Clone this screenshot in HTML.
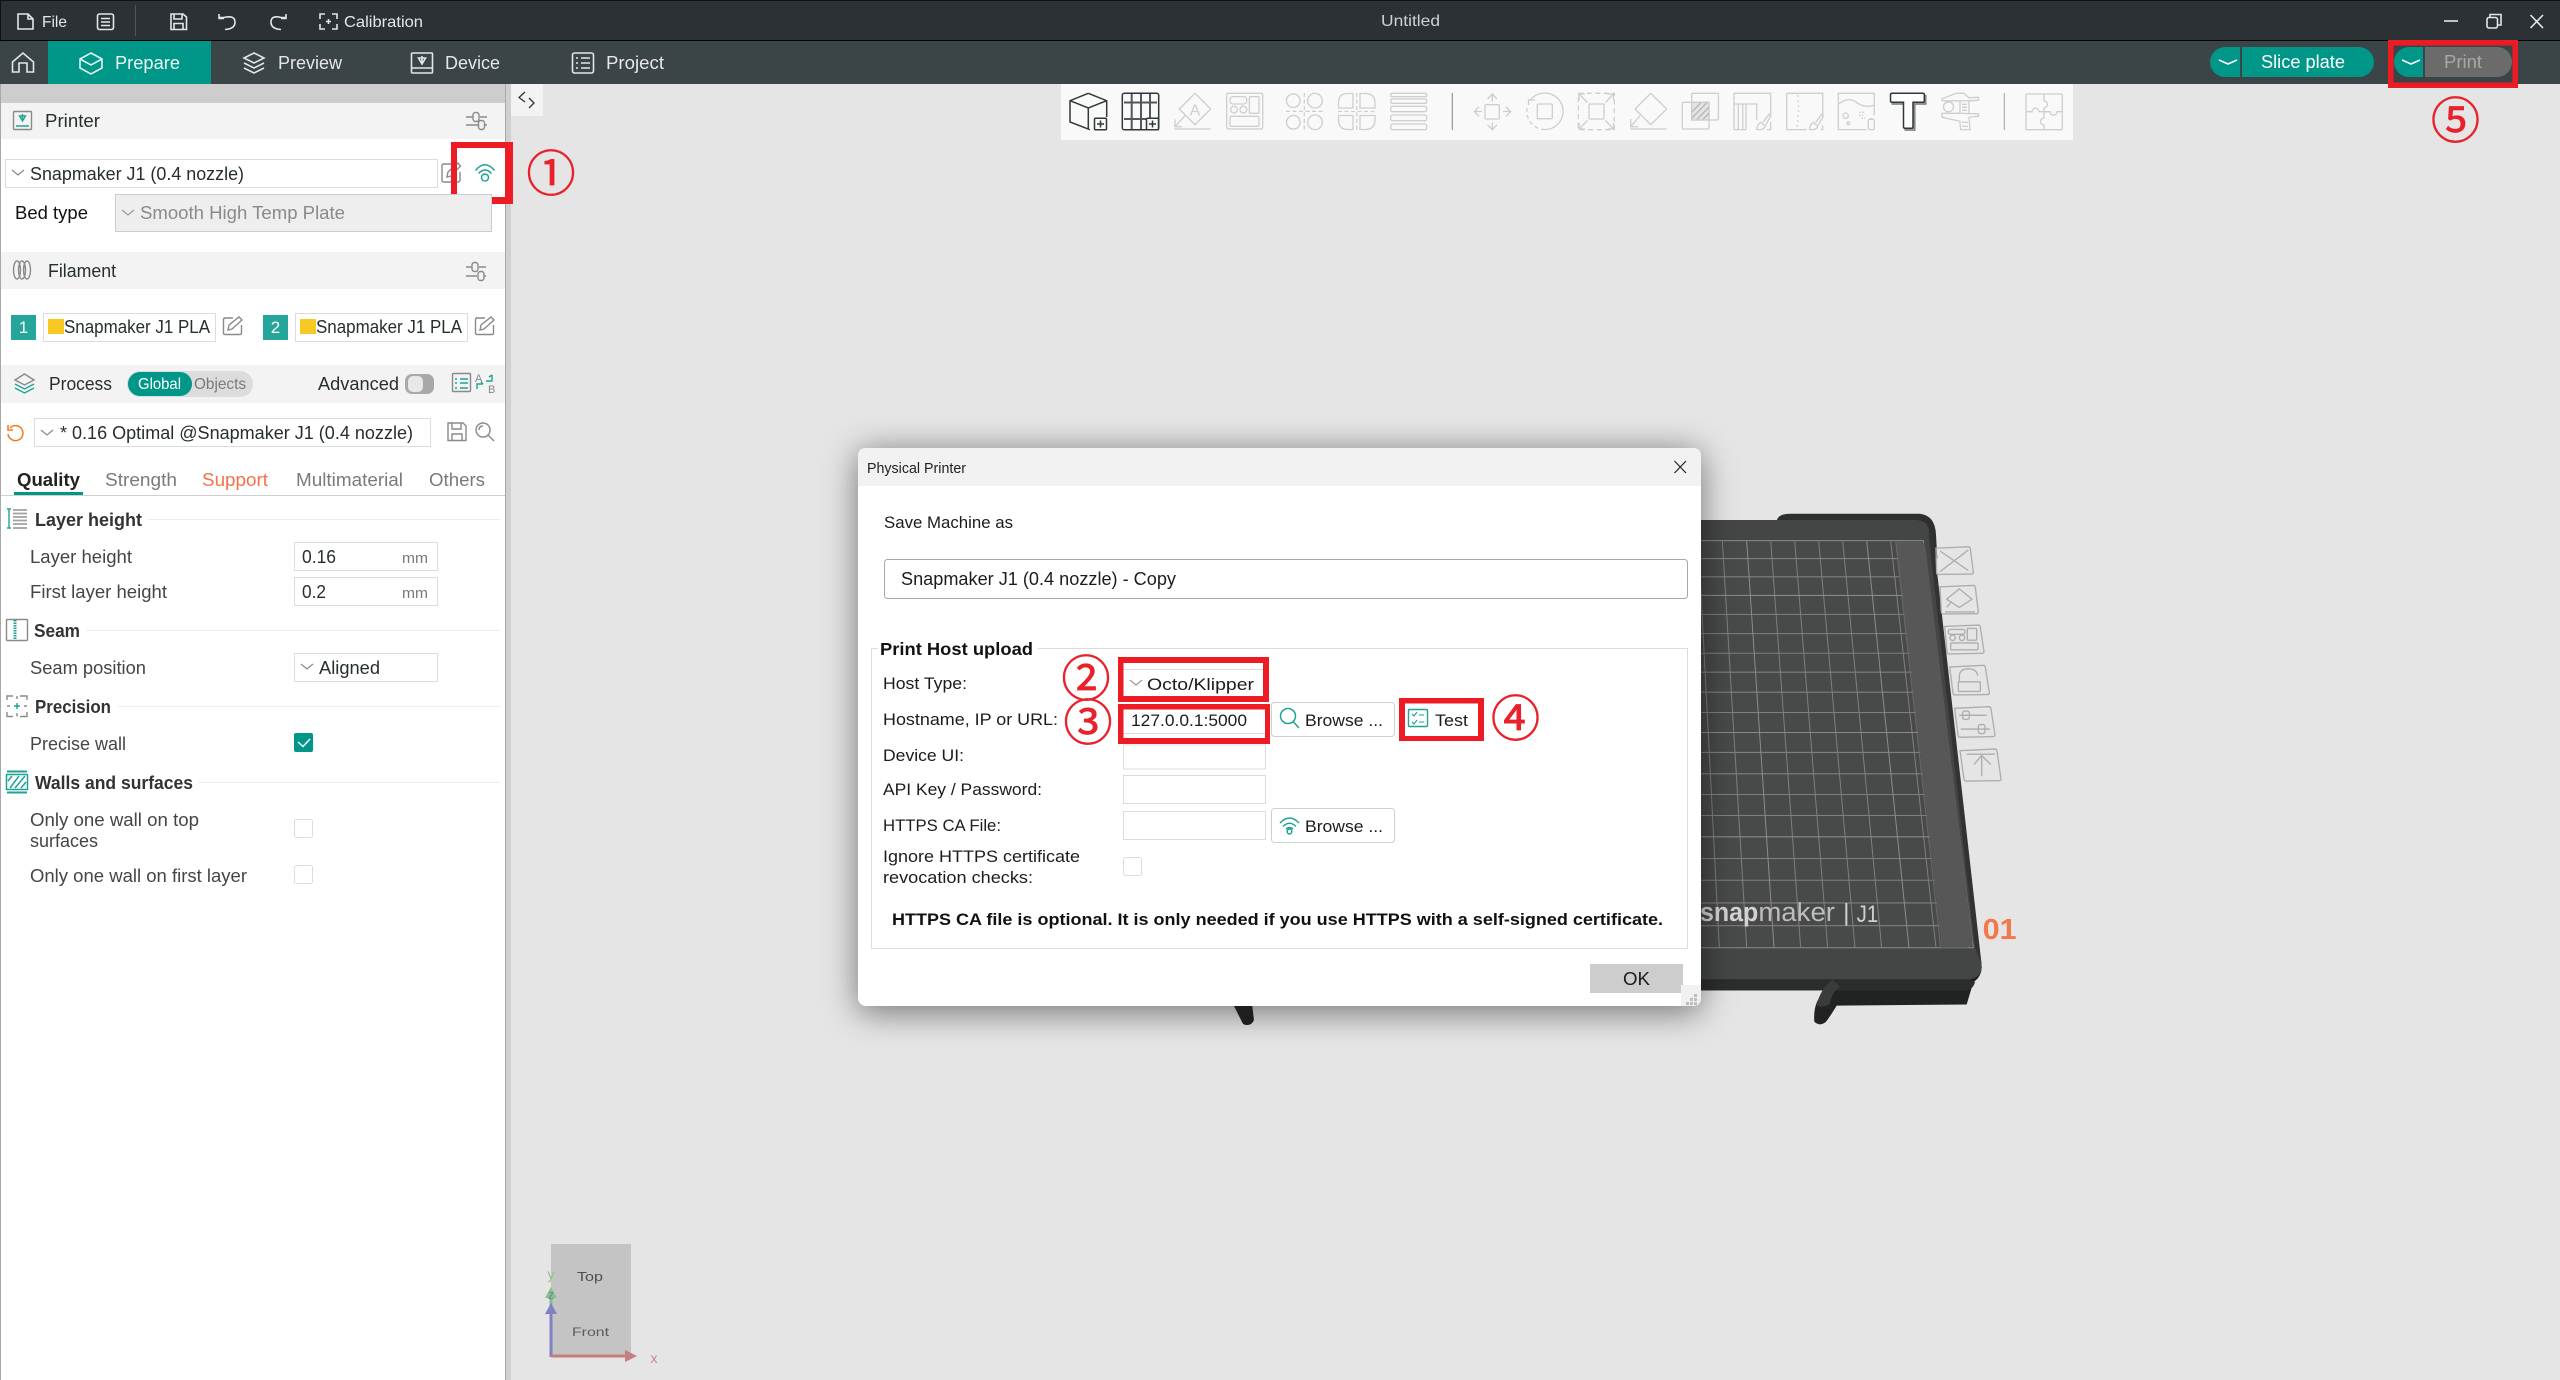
<!DOCTYPE html>
<html lang="en">
<head>
<meta charset="utf-8">
<title>Untitled</title>
<style>
html,body{margin:0;padding:0;background:#e5e5e5;width:2560px;height:1380px;overflow:hidden}
svg{display:block;position:absolute;left:0;top:0}
text{font-family:"Liberation Sans","Noto Sans CJK JP",sans-serif;white-space:pre}
.w{fill:#fff}
.l{font-size:18px;fill:#454545}
.d{font-size:18px;fill:#262e30}
.b{font-size:18px;font-weight:bold;fill:#333}
.m{font-size:16.5px;fill:#1c1c1c}
.g{fill:none;stroke:#cecece;stroke-width:1.3}
.k{fill:none;stroke:#2f383b;stroke-width:1.5}
.ic{fill:none;stroke:#8a8a8a;stroke-width:1.4}
.wi{fill:none;stroke:#e4e6e6;stroke-width:1.6}
.te{fill:none;stroke:#1fa394;stroke-width:1.5}
.bx{fill:#fff;stroke:#dcdcdc;stroke-width:1}
.circ{font-size:49px;fill:#e8212b;stroke:#e8212b;stroke-width:.7;font-family:"Noto Sans CJK JP",sans-serif}
</style>
</head>
<body>
<svg width="2560" height="1380" viewBox="0 0 2560 1380" xmlns="http://www.w3.org/2000/svg">
<defs>
<filter id="sh" x="-20%" y="-20%" width="140%" height="140%"><feGaussianBlur stdDeviation="17"/></filter>
</defs>
<rect width="2560" height="1380" fill="#e5e5e5"/>

<!-- 3D plate -->
<g transform="translate(1680,500) scale(.33333,.34440)">
  <path d="M290 60 Q295 40 330 40 H720 Q765 45 768 100 L772 170 L745 170 L740 90 L300 70Z" fill="#2e2f2f"/>
  <path d="M-300 58 H710 Q745 60 748 95 L905 1355 Q905 1385 880 1400 L860 1465 L470 1468 Q450 1500 438 1515 Q420 1530 403 1515 Q400 1480 412 1455 Q430 1425 455 1424 H-300Z" fill="#212222"/>
  <path d="M-300 58 H710 Q745 60 748 95 L905 1355 Q905 1385 870 1392 H-300Z" fill="#444645"/>
  <path d="M745 95 L762 130 L905 1350 L885 1300 Z" fill="#323333"/>
  <path d="M-300 118 H730 L880 1300 H-300Z" fill="#484949" stroke="#8a8a8a" stroke-width="3"/>
  <path d="M648 120 H720 Q735 122 737 140 L878 1280 Q878 1298 860 1300 H785Z" fill="#575757"/>
  <g stroke="#7f7f7f" stroke-width="3" fill="none">
    <path d="M-300 170H653M-300 223H660M-300 277H667M-300 332H674M-300 388H680M-300 445H688M-300 500H695M-300 558H701M-300 617H708M-300 675H714M-300 733H721M-300 795H728M-300 855H735M-300 916H742M-300 978H749M-300 1041H756M-300 1104H764M-300 1170H771M-300 1236H778"/>
    <path d="M632 118L768 1300M560 118L687 1300M488 118L605 1300M416 118L525 1300M344 118L443 1300M272 118L362 1300M200 118L282 1300M127 118L200 1300M55 118L118 1300M-17 118L38 1300"/>
    <path d="M647 118L782 1300" stroke="#6a6a6a"/>
  </g>
  <g stroke="#8f8f8f" stroke-width="2" fill="none">
    <path d="M200 118L282 1300M560 118L687 1300M-300 277H667M-300 675H714M-300 978H749"/>
  </g>
  <path d="M-300 1392 H870 L885 1400 Q880 1420 860 1425 H470 L455 1424 H-300Z" fill="#2b2c2c"/>
  <path d="M458 1392 L480 1415 Q460 1420 448 1465 Q425 1475 410 1468 Q420 1420 458 1392Z" fill="#3a3b3b"/>
  <text x="60" y="1222" font-size="74" font-weight="bold" fill="#d2d2d2" textLength="175" lengthAdjust="spacingAndGlyphs">snap</text>
  <text x="235" y="1222" font-size="74" fill="#bdbdbd" textLength="230" lengthAdjust="spacingAndGlyphs">maker</text>
  <path d="M499 1170V1236" stroke="#d0d0d0" stroke-width="6"/>
  <text x="530" y="1225" font-size="70" fill="#d0d0d0" textLength="65" lengthAdjust="spacingAndGlyphs">J1</text>
  <text x="908" y="1274" font-size="84" font-weight="bold" fill="#f4764a" textLength="102" lengthAdjust="spacingAndGlyphs">01</text>
  <g fill="none" stroke="#aeaeae" stroke-width="4">
    <path d="M768 140L866 136Q870 136 871 142L880 210Q880 215 875 215L775 216Q770 216 770 210Z"/>
    <path d="M780 148L865 205M865 145L780 208"/>
    <path d="M780 252L880 248Q885 248 886 254L895 325Q895 330 890 330L790 331Q785 331 784 325Z"/>
    <path d="M838 258L876 288L838 312L800 288ZM795 325H885M815 295L800 312"/>
    <path d="M794 367L895 363Q900 363 901 369L912 440Q912 445 907 445L806 447Q802 447 801 441Z"/>
    <rect x="805" y="376" width="50" height="14" rx="5"/><rect x="862" y="373" width="28" height="34" rx="2"/><circle cx="818" cy="400" r="8"/><circle cx="846" cy="400" r="8"/><rect x="812" y="415" width="82" height="20" rx="3"/>
    <path d="M809 485L910 480Q915 480 916 486L928 560Q928 565 923 565L824 566Q820 566 819 560Z"/>
    <path d="M838 528V510Q840 490 865 490Q890 490 893 510"/><rect x="835" y="528" width="66" height="28" rx="3"/>
    <path d="M824 605L927 600Q932 600 933 606L945 682Q945 687 940 687L840 689Q835 689 834 683Z"/>
    <path d="M838 625H920M842 665H930"/><rect x="848" y="613" width="20" height="24" rx="6"/><rect x="895" y="652" width="20" height="26" rx="6"/>
    <path d="M840 728L945 723Q950 723 951 729L963 810Q963 815 958 815L858 816Q853 816 852 810Z"/>
    <path d="M860 738H945M905 802V742M882 768L905 742L932 768"/>
  </g>
</g>

<!-- gizmo -->
<rect x="551" y="1244" width="80" height="111" fill="#c4c4c4"/>
<text x="590" y="1281" font-size="13" fill="#4d4d4d" text-anchor="middle" textLength="26" lengthAdjust="spacingAndGlyphs">Top</text>
<text x="590.5" y="1336" font-size="11.5" fill="#5a5a5a" text-anchor="middle" textLength="37" lengthAdjust="spacingAndGlyphs">Front</text>
<path d="M551 1298V1312" stroke="#83bd83" stroke-width="3"/>
<path d="M545 1298H557L551 1287Z" fill="#83c583"/>
<path d="M551 1357V1312" stroke="#8080c4" stroke-width="3"/>
<path d="M545 1314H557L551 1303Z" fill="#8080c4"/>
<path d="M551 1356H627" stroke="#c67f7f" stroke-width="3"/>
<path d="M625 1350V1362L637 1356Z" fill="#c67f7f"/>
<text x="551" y="1279" font-size="14" fill="#8cc48c" text-anchor="middle">y</text>
<text x="551" y="1299" font-size="13" fill="#7c7cc0" text-anchor="middle">z</text>
<text x="654" y="1363" font-size="14" fill="#c88a8a" text-anchor="middle">x</text>

<!-- toolbar -->
<rect x="1061" y="84" width="1012" height="56" fill="#f9f9f9"/>
<g class="k">
  <path d="M1088.300 93.300L1106.700 100.700V117M1088.300 93.300L1070 100.700V122L1090 129.700M1070 100.700L1088.300 108L1106.700 100.700M1088.300 108V129"/>
  <rect x="1094.500" y="118.300" width="12" height="11.400" rx="1"/><path d="M1100.500 120.500V127.500M1097 124H1104"/>
  <rect x="1122.300" y="93.300" width="36.400" height="36.400" rx="2"/>
  <path d="M1131.700 94V129M1141 94V129M1150 94V118M1124 102.500H1157M1124 119H1146" stroke="#50585a" stroke-width="2"/>
  <rect x="1146.500" y="118.300" width="12" height="11.400" rx="1" fill="#f9f9f9"/><path d="M1152.500 120.500V127.500M1149 124H1156"/>
</g>
<g class="g" transform="translate(1174,93.300)">
  <path d="M21 0L36.700 15.700L21 31.400L5.300 15.700Z"/><text x="21" y="22" font-size="16" fill="#cecece" stroke="none" text-anchor="middle">A</text><path d="M0 35.700H36.700M11 22.400L1 33.400M1 26V33.400H8"/>
</g>
<g class="g" transform="translate(1226.700,93.300)">
  <rect x="0" y="0" width="36" height="35.700" rx="1.500"/><rect x="3.300" y="3.300" width="16.700" height="7.400" rx="3"/><rect x="22.700" y="3.300" width="9.600" height="16.700" rx="1"/><circle cx="7.300" cy="16.300" r="3.400"/><circle cx="16.700" cy="16.300" r="3.400"/><rect x="3.300" y="23" width="29" height="10" rx="1.500"/>
</g>
<g class="g">
  <circle cx="1293.300" cy="100.700" r="6.800"/><circle cx="1315" cy="100.700" r="7.300"/><circle cx="1293.300" cy="122.300" r="6.800"/><circle cx="1315" cy="122.300" r="7.300"/>
  <path d="M1286 111.300H1323M1304.300 93V130" stroke-dasharray="4 2.500"/>
</g>
<g class="g">
  <path d="M1353 93.500V108H1338.500V103Q1338.500 93.500 1348 93.500ZM1360 93.500V108H1375V103Q1375 93.500 1365 93.500ZM1353 129.500V115.500H1338.500V120Q1338.500 129.500 1348 129.500ZM1360 129.500V115.500H1375V120Q1375 129.500 1365 129.500Z"/>
  <path d="M1338 111.500H1375.500M1356.700 93V130" stroke-dasharray="4 2.500"/>
</g>
<g class="g">
  <rect x="1390.700" y="93.300" width="36" height="3.400" rx="1.500"/><rect x="1390.700" y="99" width="36" height="4.300" rx="1.500"/><rect x="1390.700" y="106.300" width="36" height="5.400" rx="2"/><rect x="1390.700" y="115" width="36" height="5.700" rx="2"/><rect x="1390.700" y="124" width="36" height="5.700" rx="2"/>
</g>
<path d="M1452.300 93V130" stroke="#8f8f8f" stroke-width="1.100"/>
<g class="g">
  <rect x="1485" y="104.700" width="14.300" height="14.300" rx="1"/>
  <path d="M1492.300 94V101.500M1487.500 99L1492.300 94L1497 99M1492.300 129.700V122.500M1487.500 124.800L1492.300 129.700L1497 124.800M1474.300 111.500H1482M1479 106.700L1474.300 111.500L1479 116.300M1510.700 111.500H1503M1506 106.700L1510.700 111.500L1506 116.300"/>
</g>
<g class="g">
  <rect x="1537.300" y="104" width="15" height="14.700" rx="1"/>
  <path d="M1530 100.500A18.300 18.300 0 1 1 1545 129.600M1528.500 105V100H1535"/><path d="M1545 129.600A18.300 18.300 0 0 1 1527.300 107" stroke-dasharray="4 3"/>
</g>
<g class="g">
  <rect x="1578.300" y="93.300" width="36" height="36.400" stroke-dasharray="5 3.500"/><rect x="1589" y="104" width="15" height="15" rx="1"/>
  <path d="M1579 94L1587.500 102.500M1579 100V94H1585M1613.500 94L1605.500 102.500M1613.500 100V94H1607.500M1579 129L1587.500 120.500M1579 123V129H1585M1613.500 129L1605.500 120.500M1613.500 123V129H1607.500"/>
</g>
<g class="g">
  <path d="M1650.700 93.300L1666.700 109L1650.700 124.700L1635 109Z"/><path d="M1630 129H1666.700M1640 115.700L1630.700 126.700M1630.700 119V126.700H1638"/>
</g>
<g class="g">
  <rect x="1691.700" y="93.300" width="26.700" height="26.700" rx="1"/><rect x="1682.300" y="102.300" width="26.700" height="26.700" rx="1"/>
  <rect x="1691.700" y="102.300" width="17.300" height="17.700" fill="#e4e4e4"/>
  <path d="M1692 112L1701 102.500M1692 118L1707 102.500M1697 119.500L1709 107M1703 119.500L1709 113" stroke="#b8b8b8"/>
</g>
<g class="g" transform="translate(1734,93.300)">
  <path d="M0 36.300V0H36.700V24M0 10.700H22.700V27M4.300 10.700V36M8.700 10.700V36M12 10.700V36M0 36.300H12"/>
  <path d="M23 36.300Q23 31 27 29L31 33Q30 36.300 26 36.300ZM29 29L35 21Q36.500 21 36.500 23L31.500 32M33 36.300H36.700V29"/>
</g>
<g class="g" transform="translate(1786.700,93.300)">
  <path d="M20 36.300H0V0H36V24M36 32V36.300H34"/><path d="M11 2Q13 18 10 35" stroke-dasharray="1.500 3.500" stroke-width="1.600"/>
  <path d="M23 36.300Q23 31 27 29L31 33Q30 36.300 26 36.300ZM29 29L35 21Q36.500 21 36.500 23L31.500 32"/>
</g>
<g class="g" transform="translate(1838.300,93.300)">
  <path d="M28 36.300H0V0H36V22M0 11Q10 3 18 9T36 12"/><circle cx="7.300" cy="22.400" r="2.700"/><circle cx="10" cy="30" r="1.400"/><rect x="30" y="26" width="6" height="10.300" rx="1.500"/><path d="M33 26V23M21 19H27M21 22H25M23 25H27" stroke-dasharray="1.500 1.500"/>
</g>
<g transform="translate(1890,93.300)">
  <path d="M2 2H36V11H25V37H15V11H2Z" fill="#9a9a9a" stroke="#777" stroke-width="1"/>
  <path d="M2 0H33Q34.300 0 34.300 1.500V7.500Q34.300 9 33 9H23V33.500Q23 35 21.500 35H15Q13.500 35 13.500 33.500V9H2Q0.500 9 0.500 7.500V1.500Q0.500 0 2 0Z" fill="#fdfdfd" stroke="#2f383b" stroke-width="1.500"/>
</g>
<g class="g" transform="translate(1942,93.300)">
  <path d="M0 5.500L14 0H22L27 4.500L36.500 4V7L27 7.500L18 7.500H0ZM0 20H17L36.500 20.500V23L27 24L28 36.300H18.500L18 28L0 24ZM18 7.500V20M27 7.500V20"/><rect x="1.500" y="8.500" width="10" height="10" rx="5"/><path d="M20 11H25M20 14H25M20 17H25M20 29H26M20 33H26"/>
</g>
<path d="M2004.300 93V130" stroke="#a8a8a8" stroke-width="1.100"/>
<g class="g">
  <rect x="2026" y="94" width="36.300" height="35.700" rx="1"/>
  <path d="M2044 94V101a3.500 3.500 0 0 1 0 7V111.700M2026 111.700H2032a3.500 3.500 0 0 1 7 0H2044M2044 111.700H2050a3.500 3.500 0 0 0 7 0H2062.300M2044 111.700V118a3.500 3.500 0 0 0 0 7V129.700"/>
</g>

<!-- title bar -->
<rect x="0" y="0" width="2560" height="41" fill="#2b3134"/>
<rect x="0" y="40" width="2560" height="1" fill="#050505"/>
<rect x="0" y="0" width="2560" height="1" fill="#111"/>
<rect x="0" y="0" width="1" height="41" fill="#111"/>
<g class="wi">
  <path d="M18 14H28L33 19V29H18ZM28 14V19H33"/>
  <rect x="97.500" y="14" width="16" height="15.500" rx="2"/><path d="M101 18.500H110M101 22H110M101 25.500H110"/>
  <path d="M171 14H183L186.500 17V29.500H171ZM174 14V19H182V14M174 29V23.500H183V29"/>
  <path d="M219 17.500H224Q235 15 235 22Q235 29 225 29.500M219 14V18.500H224"/>
  <path d="M286 17.500H281Q271 15 271 22Q271 29 281 29.500M286 14V18.500H281"/>
  <path d="M320 19V14H325M332 14H337V19M337 24V29H332M325 29H320V24M328.500 19V24M326 21.500H331"/>
  <path d="M2444 21H2458"/>
  <rect x="2487" y="17.500" width="10.500" height="10.500" rx="2"/><path d="M2490 17V14.500H2501V25H2498"/>
  <path d="M2530.500 15L2543 28M2543 15L2530.500 28"/>
</g>
<path d="M135.500 5V36" stroke="#555" stroke-width="1"/>
<text x="42" y="27" font-size="16" class="w" textLength="25" lengthAdjust="spacingAndGlyphs" style="fill:#e6e8e8">File</text>
<text x="344" y="27" font-size="16" textLength="79" lengthAdjust="spacingAndGlyphs" style="fill:#e6e8e8">Calibration</text>
<text x="1381" y="26" font-size="16" textLength="59" lengthAdjust="spacingAndGlyphs" style="fill:#cfd2d2">Untitled</text>

<!-- tab bar -->
<rect x="0" y="41" width="2560" height="43" fill="#3b4447"/>
<rect x="48" y="41" width="163" height="43" fill="#009688"/>
<g class="wi">
  <path d="M12.500 62L23 53L33.500 62V72H27V63H19V72H12.500Z"/>
  <path d="M91 53L102 59V68L91 74L80 68V59ZM80 59L91 65L102 59" stroke="#dff3f0"/>
  <path d="M254 53L264 58L254 63L244 58ZM244 63L254 68L264 63M244 68L254 73L264 68"/>
  <rect x="411.500" y="53" width="21" height="20" rx="1"/><path d="M411.500 68H432.500M422 56V63M418.500 58H425.500L422 64Z"/>
  <rect x="572.500" y="53" width="21" height="20" rx="2"/><path d="M576 58H578M581 58H590M576 63H578M581 63H590M576 68H578M581 68H590"/>
</g>
<text x="115" y="69" font-size="18" textLength="65" lengthAdjust="spacingAndGlyphs" fill="#eaf7f5">Prepare</text>
<text x="278" y="69" font-size="18" textLength="64" lengthAdjust="spacingAndGlyphs" fill="#e6e8e8">Preview</text>
<text x="445" y="69" font-size="18" textLength="55" lengthAdjust="spacingAndGlyphs" fill="#e6e8e8">Device</text>
<text x="606" y="69" font-size="18" textLength="58" lengthAdjust="spacingAndGlyphs" fill="#e6e8e8">Project</text>

<path d="M2225 47H2240V77H2225A15 15 0 0 1 2225 47Z" fill="#009688"/>
<path d="M2242 47H2359A15 15 0 0 1 2359 77H2242Z" fill="#009688"/>
<path d="M2219 60L2228 64L2237 60" fill="none" stroke="#fff" stroke-width="1.600"/>
<text x="2261" y="68" font-size="18" textLength="84" lengthAdjust="spacingAndGlyphs" fill="#fff">Slice plate</text>
<path d="M2409 47H2423V77H2409A15 15 0 0 1 2409 47Z" fill="#009688"/>
<path d="M2425 47H2497A15 15 0 0 1 2497 77H2425Z" fill="#6b6b6b"/>
<path d="M2402 60L2411 64L2420 60" fill="none" stroke="#fff" stroke-width="1.600"/>
<text x="2444" y="68" font-size="18" textLength="38" lengthAdjust="spacingAndGlyphs" fill="#a8a8a8">Print</text>

<!-- sidebar -->
<rect x="0" y="84" width="505" height="1296" fill="#fff"/>
<rect x="0" y="84" width="1" height="1296" fill="#a8a8a8"/>
<rect x="505" y="84" width="6" height="1296" fill="#d0d0d0"/>
<rect x="505" y="84" width="1" height="1296" fill="#a8a8a8"/>
<rect x="1" y="84" width="504" height="19" fill="#cdcdcd"/>
<rect x="511" y="84" width="32" height="32" fill="#f3f3f3"/>
<path d="M525 92L519 97.500L525 102M529 98L534 103L529 108" fill="none" stroke="#333" stroke-width="1.300"/>

<rect x="1" y="103" width="504" height="36" fill="#f3f3f3"/>
<g class="ic">
  <rect x="13.500" y="111.500" width="18" height="18" rx="1"/><path d="M16 126H29" stroke="#1fa394" stroke-width="1.500"/><path d="M22.500 114V121M19.500 116H25.500L22.500 121Z" stroke="#1fa394"/>
  <path d="M466 117H473M480 117H487M466 125H478M485 125H487"/><rect x="473" y="112.500" width="6" height="9" rx="2.500"/><rect x="478.500" y="120.500" width="6" height="9" rx="2.500"/>
</g>
<text x="45" y="127" class="d" textLength="55" lengthAdjust="spacingAndGlyphs">Printer</text>
<rect x="5.500" y="159.500" width="432" height="28" class="bx"/>
<path d="M12 170L18 175L24 170" fill="none" stroke="#888" stroke-width="1.200"/>
<text x="30" y="180" class="d" textLength="214" lengthAdjust="spacingAndGlyphs">Snapmaker J1 (0.4 nozzle)</text>
<g class="ic">
  <path d="M451 164H444Q442 164 442 166V180Q442 182 444 182H458Q460 182 460 180V172"/><path d="M447 177L448 172L458 163L460.500 166L451 176Z"/>
</g>
<g class="te">
  <path d="M475.500 170.500Q485 159 494.500 170.500M478.500 173.500Q485 166.500 491.500 173.500"/><circle cx="485" cy="177.500" r="3.500"/>
</g>
<path fill-rule="evenodd" fill="#ed1c24" d="M451 142H513V204H451ZM457 148V197H505V148Z"/>
<text x="551" y="191" class="circ" text-anchor="middle">①</text>

<text x="15" y="219" font-size="18" fill="#111" textLength="73" lengthAdjust="spacingAndGlyphs">Bed type</text>
<rect x="115.500" y="194.500" width="376" height="37" fill="#eeeeee" stroke="#cccccc"/>
<path d="M122 210L128 215L134 210" fill="none" stroke="#999" stroke-width="1.200"/>
<text x="140" y="219" font-size="18" fill="#8a8a8a" textLength="205" lengthAdjust="spacingAndGlyphs">Smooth High Temp Plate</text>

<rect x="1" y="252" width="504" height="37" fill="#f3f3f3"/>
<g class="ic">
  <ellipse cx="17" cy="270" rx="3.500" ry="9"/><ellipse cx="22" cy="270" rx="3.500" ry="9"/><ellipse cx="27" cy="270" rx="3.500" ry="9"/>
  <path d="M466 267H472M479 267H486M466 276H477M484 276H486"/><rect x="472" y="262.500" width="6" height="9" rx="2.500"/><rect x="478" y="271.500" width="6" height="9" rx="2.500"/>
</g>
<text x="48" y="277" class="d" textLength="68" lengthAdjust="spacingAndGlyphs">Filament</text>

<rect x="11" y="315" width="25" height="25" fill="#26a69a"/>
<text x="23.500" y="333" font-size="17" fill="#fff" text-anchor="middle">1</text>
<rect x="43.500" y="313.500" width="172" height="28" class="bx"/>
<rect x="48" y="319" width="16" height="15" fill="#f8c922"/>
<text x="64" y="333" class="d" textLength="146" lengthAdjust="spacingAndGlyphs">Snapmaker J1 PLA</text>
<rect x="263" y="315" width="25" height="25" fill="#26a69a"/>
<text x="275.500" y="333" font-size="17" fill="#fff" text-anchor="middle">2</text>
<rect x="295.500" y="313.500" width="172" height="28" class="bx"/>
<rect x="300" y="319" width="16" height="15" fill="#f8c922"/>
<text x="316" y="333" class="d" textLength="146" lengthAdjust="spacingAndGlyphs">Snapmaker J1 PLA</text>
<g class="ic">
  <path d="M233 318H225Q223.500 318 223.500 320V333Q223.500 334.500 225 334.500H240Q241.500 334.500 241.500 333V325"/><path d="M228 330L229 325L239 317L242 320L232 329Z"/>
  <path d="M485 318H477Q475.500 318 475.500 320V333Q475.500 334.500 477 334.500H492Q493.500 334.500 493.500 333V325"/><path d="M480 330L481 325L491 317L494 320L484 329Z"/>
</g>

<rect x="1" y="365" width="504" height="38" fill="#f3f3f3"/>
<g class="ic">
  <path d="M24.500 374L34 380L24.500 385L15 380Z"/><path d="M15 384L24.500 389L34 384M15 388L24.500 393L34 388" stroke="#1fa394"/>
</g>
<text x="49" y="390" class="d" textLength="63" lengthAdjust="spacingAndGlyphs">Process</text>
<rect x="127" y="371" width="126" height="26" rx="13" fill="#dcdcdc"/>
<rect x="128" y="372" width="64" height="24" rx="12" fill="#009688"/>
<text x="138" y="389" font-size="16" fill="#fff" textLength="43" lengthAdjust="spacingAndGlyphs">Global</text>
<text x="194" y="389" font-size="16" fill="#7a7a7a" textLength="52" lengthAdjust="spacingAndGlyphs">Objects</text>
<text x="318" y="390" class="d" textLength="81" lengthAdjust="spacingAndGlyphs">Advanced</text>
<rect x="405" y="374" width="29" height="20" rx="7" fill="#a8a8a8"/>
<rect x="408" y="376" width="15" height="16" rx="5" fill="#e8e8e8"/>
<g class="ic">
  <rect x="452.500" y="373.500" width="18" height="18" rx="1"/><path d="M455 379H457M460 379H468M455 383H457M460 383H468M455 388H457M460 388H468" stroke="#1fa394"/>
  <path d="M486 381H492V375M489 377L492 375" stroke="#1fa394"/><path d="M477 389V384H483M481 382L483 384" stroke="#1fa394"/>
</g>
<text x="475" y="382" font-size="11" fill="#888">A</text>
<text x="488" y="393" font-size="11" fill="#888">B</text>

<!-- preset -->
<path d="M10 428A7.500 7.500 0 1 1 8 434M8 425V430H13" fill="none" stroke="#ef7b23" stroke-width="1.500"/>
<rect x="34.500" y="418.500" width="396" height="28" class="bx"/>
<path d="M41 430L47 435L53 430" fill="none" stroke="#888" stroke-width="1.200"/>
<text x="60" y="439" class="d" textLength="353" lengthAdjust="spacingAndGlyphs">* 0.16 Optimal @Snapmaker J1 (0.4 nozzle)</text>
<g class="ic">
  <path d="M448 423H463L466 426V440.500H448ZM452 423V429H461V423M452 440V434H462V440"/>
  <circle cx="483" cy="430" r="7"/><path d="M488 435L494 441M479 430Q479 426 483 426"/>
</g>

<!-- tabs -->
<text x="17" y="486" font-size="18" font-weight="bold" fill="#222" textLength="63" lengthAdjust="spacingAndGlyphs">Quality</text>
<text x="105" y="486" font-size="18" fill="#7a7a7a" textLength="72" lengthAdjust="spacingAndGlyphs">Strength</text>
<text x="202" y="486" font-size="18" fill="#f5714c" textLength="66" lengthAdjust="spacingAndGlyphs">Support</text>
<text x="296" y="486" font-size="18" fill="#7a7a7a" textLength="107" lengthAdjust="spacingAndGlyphs">Multimaterial</text>
<text x="429" y="486" font-size="18" fill="#7a7a7a" textLength="56" lengthAdjust="spacingAndGlyphs">Others</text>
<rect x="1" y="495" width="504" height="1" fill="#cfcfcf"/>
<rect x="14" y="492" width="69" height="3" fill="#009688"/>

<!-- Layer height -->
<g class="ic">
  <path d="M7 509H11M7 528H11M9 509V528" stroke="#1fa394"/>
  <path d="M13 510H27M13 513.500H27M13 517H27M13 520.500H27M13 524H27M13 528H27" stroke-width="1.800" stroke="#a0a0a0"/>
</g>
<text x="35" y="526" class="b" textLength="107" lengthAdjust="spacingAndGlyphs">Layer height</text>
<rect x="148" y="519" width="352" height="1" fill="#ececec"/>
<text x="30" y="563" class="l" textLength="102" lengthAdjust="spacingAndGlyphs">Layer height</text>
<rect x="294.500" y="542.500" width="143" height="28" class="bx"/>
<text x="302" y="563" class="d" textLength="34" lengthAdjust="spacingAndGlyphs">0.16</text>
<text x="402" y="563" font-size="15" fill="#777" textLength="26" lengthAdjust="spacingAndGlyphs">mm</text>
<text x="30" y="598" class="l" textLength="137" lengthAdjust="spacingAndGlyphs">First layer height</text>
<rect x="294.500" y="577.500" width="143" height="28" class="bx"/>
<text x="302" y="598" class="d" textLength="24" lengthAdjust="spacingAndGlyphs">0.2</text>
<text x="402" y="598" font-size="15" fill="#777" textLength="26" lengthAdjust="spacingAndGlyphs">mm</text>

<!-- Seam -->
<g class="ic"><rect x="6.500" y="619.500" width="21" height="21" rx="1"/><path d="M15 620V640" stroke="#1fa394" stroke-width="3" stroke-dasharray="1.500 1"/></g>
<text x="34" y="637" class="b" textLength="46" lengthAdjust="spacingAndGlyphs">Seam</text>
<rect x="86" y="630" width="414" height="1" fill="#ececec"/>
<text x="30" y="674" class="l" textLength="116" lengthAdjust="spacingAndGlyphs">Seam position</text>
<rect x="294.500" y="653.500" width="143" height="28" class="bx"/>
<path d="M301 664L307 669L313 664" fill="none" stroke="#888" stroke-width="1.200"/>
<text x="319" y="674" class="d" textLength="61" lengthAdjust="spacingAndGlyphs">Aligned</text>

<!-- Precision -->
<g class="ic"><path d="M7 700V696H13M20 696H27V700M27 712V716.500H20M13 716.500H7V712M7 706H10M24 706H27M17 696V699M17 713V716.500"/><path d="M14 706H20M17 703V709" stroke="#1fa394"/></g>
<text x="35" y="713" class="b" textLength="76" lengthAdjust="spacingAndGlyphs">Precision</text>
<rect x="118" y="706" width="382" height="1" fill="#ececec"/>
<text x="30" y="750" class="l" textLength="96" lengthAdjust="spacingAndGlyphs">Precise wall</text>
<rect x="294" y="733" width="19" height="19" rx="2" fill="#009688"/>
<path d="M298 742L303 746.500L310 739" fill="none" stroke="#fff" stroke-width="1.500"/>

<!-- Walls -->
<g class="te"><rect x="6.500" y="774.500" width="21" height="15"/><path d="M7 771.500H27M7 792.500H27" stroke-width="2"/><path d="M10 788L19 776M15 788L25 776M8 781L12 776M21 788L26 782"/></g>
<text x="35" y="789" class="b" textLength="158" lengthAdjust="spacingAndGlyphs">Walls and surfaces</text>
<rect x="198" y="782" width="302" height="1" fill="#ececec"/>
<text x="30" y="826" class="l" textLength="169" lengthAdjust="spacingAndGlyphs">Only one wall on top</text>
<text x="30" y="847" class="l" textLength="68" lengthAdjust="spacingAndGlyphs">surfaces</text>
<rect x="294.500" y="819.500" width="18" height="18" rx="2" fill="#fff" stroke="#dcdcdc"/>
<text x="30" y="882" class="l" textLength="217" lengthAdjust="spacingAndGlyphs">Only one wall on first layer</text>
<rect x="294.500" y="865.500" width="18" height="18" rx="2" fill="#fff" stroke="#dcdcdc"/>

<!-- dialog shadow -->
<rect x="858" y="452" width="843" height="560" rx="8" fill="#000" fill-opacity=".5" filter="url(#sh)"/>
<!-- leg -->
<path d="M1233 1004H1252L1254 1020Q1252 1025 1247 1025Q1243 1025 1242 1022Z" fill="#1d1f1f"/>

<!-- dialog -->
<rect x="858" y="448" width="843" height="558" rx="8" fill="#fff"/>
<path d="M858 486V456Q858 448 866 448H1693Q1701 448 1701 456V486Z" fill="#f2f2f2"/>
<text x="867" y="473" font-size="14.500" fill="#222" textLength="99" lengthAdjust="spacingAndGlyphs">Physical Printer</text>
<path d="M1674.500 461L1686 473M1686 461L1674.500 473" fill="none" stroke="#222" stroke-width="1.200"/>
<text x="884" y="528" class="m" textLength="129" lengthAdjust="spacingAndGlyphs">Save Machine as</text>
<rect x="884.500" y="559.500" width="803" height="39" rx="3" fill="#fff" stroke="#a8a8a8"/>
<text x="901" y="585" font-size="18" fill="#1c1c1c" textLength="275" lengthAdjust="spacingAndGlyphs">Snapmaker J1 (0.4 nozzle) - Copy</text>

<rect x="871.500" y="648.500" width="816" height="300" fill="#fff" stroke="#dcdcdc"/>
<rect x="878" y="640" width="160" height="16" fill="#fff"/>
<text x="880" y="655" font-size="17.500" font-weight="bold" fill="#111" textLength="153" lengthAdjust="spacingAndGlyphs">Print Host upload</text>

<text x="883" y="689" class="m" textLength="84" lengthAdjust="spacingAndGlyphs">Host Type:</text>
<rect x="1123" y="669" width="140" height="1" fill="#dcdcdc"/>
<path d="M1130 680L1136 685L1142 680" fill="none" stroke="#888" stroke-width="1.100"/>
<text x="1147" y="690" class="m" textLength="107" lengthAdjust="spacingAndGlyphs">Octo/Klipper</text>

<text x="883" y="725" class="m" textLength="175" lengthAdjust="spacingAndGlyphs">Hostname, IP or URL:</text>
<rect x="1123" y="733" width="142" height="1" fill="#dcdcdc"/>
<text x="1131" y="726" class="m" textLength="116" lengthAdjust="spacingAndGlyphs">127.0.0.1:5000</text>

<rect x="1271.500" y="702.500" width="123" height="34" rx="3" fill="#fff" stroke="#cfcfcf"/>
<circle cx="1288" cy="716" r="7.500" fill="none" stroke="#1fa394" stroke-width="1.500"/>
<path d="M1293.500 722L1299 728" stroke="#1fa394" stroke-width="1.500"/>
<text x="1305" y="726" class="m" textLength="78" lengthAdjust="spacingAndGlyphs">Browse ...</text>

<rect x="1408.500" y="709.500" width="19" height="17" rx="1" fill="none" stroke="#1fa394" stroke-width="1.400"/>
<path d="M1412 714L1414 716L1417 712M1412 722L1414 724L1417 720M1419 715H1424M1419 722H1424" fill="none" stroke="#1fa394" stroke-width="1.100"/>
<text x="1435" y="726" class="m" textLength="33" lengthAdjust="spacingAndGlyphs">Test</text>

<rect x="1123.500" y="745" width="142" height="24" class="bx"/>
<text x="883" y="761" class="m" textLength="81" lengthAdjust="spacingAndGlyphs">Device UI:</text>
<text x="883" y="795" class="m" textLength="159" lengthAdjust="spacingAndGlyphs">API Key / Password:</text>
<rect x="1123.500" y="775.500" width="142" height="28" class="bx"/>
<text x="883" y="831" class="m" textLength="118" lengthAdjust="spacingAndGlyphs">HTTPS CA File:</text>
<rect x="1123.500" y="811.500" width="142" height="28" class="bx"/>
<rect x="1271.500" y="808.500" width="123" height="34" rx="3" fill="#fff" stroke="#cfcfcf"/>
<g class="te"><path d="M1280 823Q1289.500 813 1299 823M1283 826.500Q1289.500 820 1296 826.500M1286 829Q1289.500 826 1293 829"/><ellipse cx="1289.500" cy="831.500" rx="2.300" ry="2.500"/></g>
<text x="1305" y="832" class="m" textLength="78" lengthAdjust="spacingAndGlyphs">Browse ...</text>
<text x="883" y="862" class="m" textLength="197" lengthAdjust="spacingAndGlyphs">Ignore HTTPS certificate</text>
<text x="883" y="883" class="m" textLength="150" lengthAdjust="spacingAndGlyphs">revocation checks:</text>
<rect x="1123.500" y="857.500" width="18" height="18" rx="2" fill="#fff" stroke="#dcdcdc"/>
<text x="892" y="925" font-size="17" font-weight="bold" fill="#111" textLength="771" lengthAdjust="spacingAndGlyphs">HTTPS CA file is optional. It is only needed if you use HTTPS with a self-signed certificate.</text>

<rect x="1590" y="964" width="93" height="29" fill="#cdcdcd"/>
<text x="1623" y="985" font-size="18" fill="#1c1c1c" textLength="27" lengthAdjust="spacingAndGlyphs">OK</text>
<path d="M1681 985H1701V998Q1701 1006 1693 1006H1681Z" fill="#f1f1f1"/>
<g fill="#bdbdbd"><rect x="1694" y="994" width="3" height="3"/><rect x="1690" y="998" width="3" height="3"/><rect x="1694" y="998" width="3" height="3"/><rect x="1686" y="1002" width="3" height="3"/><rect x="1690" y="1002" width="3" height="3"/><rect x="1694" y="1002" width="3" height="3"/></g>

<!-- red annotation frames -->
<path fill-rule="evenodd" fill="#ed1c24" d="M1118 657H1269V702H1118ZM1123.500 663V696H1263V663Z"/>
<path fill-rule="evenodd" fill="#ed1c24" d="M1118 704H1270V744H1118ZM1123.500 709.500V738H1265V709.500Z"/>
<path fill-rule="evenodd" fill="#ed1c24" d="M1399 698H1484V741H1399ZM1405 703.500V736H1478V703.500Z"/>
<path fill-rule="evenodd" fill="#ed1c24" d="M2388 40H2518V88H2388ZM2393.500 45.500V82.500H2512.500V45.500Z"/>
<text x="1086" y="696" class="circ" text-anchor="middle">②</text>
<text x="1088" y="740" class="circ" text-anchor="middle">③</text>
<text x="1515.500" y="736" class="circ" text-anchor="middle">④</text>
<text x="2455.500" y="138" class="circ" text-anchor="middle">⑤</text>
</svg>
</body>
</html>
